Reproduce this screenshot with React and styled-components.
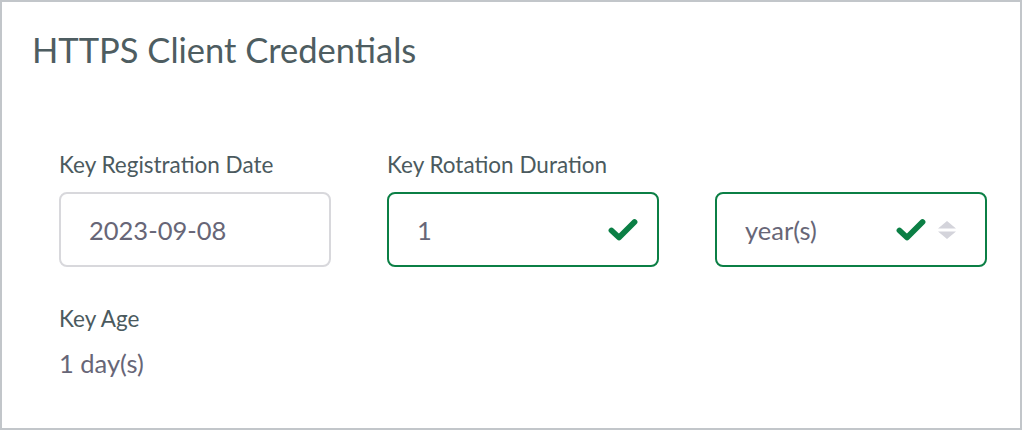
import React from 'react'
import styled, { createGlobalStyle } from 'styled-components'

const Global = createGlobalStyle`
  html, body { margin: 0; padding: 0; background: #ffffff; }
  body { font-family: 'Lato', 'Noto Sans', sans-serif; }
`

const Panel = styled.section`
  box-sizing: border-box;
  width: 1022px;
  height: 430px;
  border: 2px solid #c2c6ca;
  background: #fff;
  padding: 26px 0 0 30px;
`

const Title = styled.h2`
  margin: 0;
  font-size: 34.5px;
  font-weight: 400;
  line-height: 44px;
  color: #4e5d61;
`

const Form = styled.div`
  padding: 78px 0 0 27px;
  display: flex;
  flex-direction: column;
  gap: 37px;
`

const Row = styled.div`
  display: flex;
  gap: 56px;
  align-items: flex-end;
`

const Field = styled.div`
  display: flex;
  flex-direction: column;
  gap: 12px;
`

const Label = styled.label`
  font-size: 22.5px;
  line-height: 30px;
  color: #4b5a5e;
`

const Box = styled.div`
  box-sizing: border-box;
  width: 272px;
  height: 75px;
  border: 2px solid ${p => (p.$valid ? '#0b7f45' : '#d8d8dc')};
  border-radius: 8px;
  display: flex;
  align-items: center;
  padding: 0 ${p => p.$pr || 18}px 0 28px;
  gap: 10px;
`

const Value = styled.span`
  flex: 1;
  font-size: 25.5px;
  color: #676677;
`

const Static = styled.div`
  font-size: 25.5px;
  line-height: 34px;
  color: #676677;
`

const Check = () => (
  <svg width="32" height="26" viewBox="0 0 32 26">
    <path d="M4.5 13.5 L12 20.5 L27.5 5" fill="none" stroke="#0b7f45" strokeWidth="5.8" strokeLinecap="round" strokeLinejoin="round" />
  </svg>
)

const Arrows = () => (
  <svg width="20" height="24" viewBox="0 0 20 24">
    <path d="M10 3 L19 10.5 H1 Z M1 13.5 H19 L10 21 Z" fill="#d4d4db" />
  </svg>
)

export default function App() {
  return (
    <>
      <Global />
      <Panel>
        <Title>HTTPS Client Credentials</Title>
        <Form>
          <Row>
            <Field>
              <Label>Key Registration Date</Label>
              <Box>
                <Value>2023-09-08</Value>
              </Box>
            </Field>
            <Field>
              <Label>Key Rotation Duration</Label>
              <Box $valid>
                <Value>1</Value>
                <Check />
              </Box>
            </Field>
            <Field>
              <Box $valid $pr={28}>
                <Value>year(s)</Value>
                <Check />
                <Arrows />
              </Box>
            </Field>
          </Row>
          <Field>
            <Label>Key Age</Label>
            <Static>1 day(s)</Static>
          </Field>
        </Form>
      </Panel>
    </>
  )
}
